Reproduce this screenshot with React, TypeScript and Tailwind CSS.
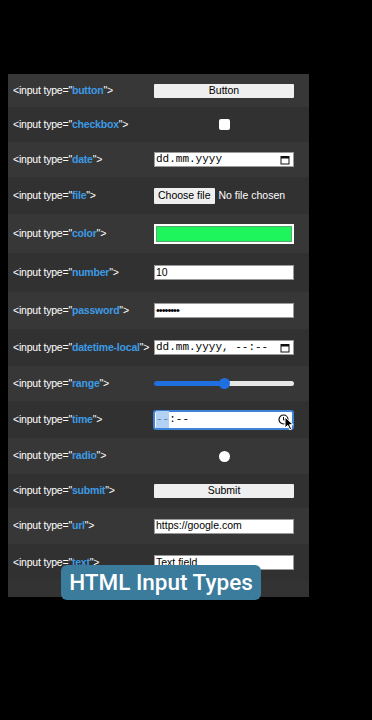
import React from "react";

const Cal = () => (
  <svg width="10" height="10" viewBox="0 0 10 10" className="shrink-0">
    <rect x="1" y="1.5" width="8" height="7.5" fill="none" stroke="#111" strokeWidth="1" />
    <rect x="1" y="1.5" width="8" height="2" fill="#111" />
  </svg>
);

const Field = ({ children, className = "" }: { children?: React.ReactNode; className?: string }) => (
  <div className={`w-[140px] h-[15px] bg-white border border-[#9a9a9a] flex items-center px-[1px] text-black ${className}`}>
    {children}
  </div>
);

const controls: React.ReactNode[] = [
  <div className="w-[140px] h-[14px] bg-[#efefef] flex items-center justify-center text-black text-[10.5px] rounded-[1px]">Button</div>,
  <div className="w-[140px] flex justify-center"><div className="w-[11px] h-[11px] bg-white rounded-[2px]" /></div>,
  <Field className="justify-between pr-[3px]"><span style={{ fontFamily: "'Liberation Mono', monospace" }} className="text-[11px]">dd.mm.yyyy</span><Cal /></Field>,
  <div className="w-[140px] flex items-center gap-[4px]">
    <div className="h-[16px] px-[4px] bg-[#efefef] text-black text-[10.5px] flex items-center rounded-[1px]">Choose file</div>
    <span className="text-white text-[10.5px]">No file chosen</span>
  </div>,
  <div className="w-[140px] h-[20px] bg-white p-[2px]"><div className="w-full h-full bg-[#1ef45b] border border-[#58a870]" /></div>,
  <Field><span className="text-[10.5px]">10</span></Field>,
  <Field><span className="text-[11px] tracking-[-1px] leading-none">••••••••</span></Field>,
  <Field className="justify-between pr-[3px]"><span style={{ fontFamily: "'Liberation Mono', monospace" }} className="text-[11px]">dd.mm.yyyy, --:--</span><Cal /></Field>,
  <div className="w-[140px] h-[11px] relative flex items-center">
    <div className="w-[70px] h-[5px] bg-[#1f6fe0] rounded-l-full" />
    <div className="flex-1 h-[5px] bg-[#e6e6e6] rounded-r-full" />
    <div className="absolute left-[65px] top-0 w-[11px] h-[11px] rounded-full bg-[#1f6fe0]" />
  </div>,
  <div className="w-[141px] h-[20px] -ml-[1px] bg-white border-2 border-[#3f83d6] rounded-[3px] flex items-center pl-[1px] pr-[3px] justify-between relative">
    <span style={{ fontFamily: "'Liberation Mono', monospace" }} className="text-[11px] text-black flex"><span className="bg-[#b3d1f5] text-[#5a7fb0]">--</span><span>:--</span></span>
    <svg width="11" height="11" viewBox="0 0 11 11"><circle cx="5.5" cy="5.5" r="4.5" fill="none" stroke="#111" strokeWidth="1.2" /><path d="M5.5 3v3h2" fill="none" stroke="#111" strokeWidth="1" /></svg>
    <svg width="10" height="15" viewBox="0 0 10 15" className="absolute left-[129px] top-[4px]"><path d="M1 1v11l2.8-2.6 2 4.4 1.8-.8-2-4.3H9.2z" fill="#000" stroke="#fff" strokeWidth="1" /></svg>
  </div>,
  <div className="w-[140px] flex justify-center"><div className="w-[11px] h-[11px] bg-white rounded-full" /></div>,
  <div className="w-[140px] h-[14px] bg-[#efefef] flex items-center justify-center text-black text-[10.5px] rounded-[1px]">Submit</div>,
  <Field><span className="text-[10.5px]">https://google.com</span></Field>,
  <Field><span className="text-[10.5px]">Text field</span></Field>,
];

const types = ["button", "checkbox", "date", "file", "color", "number", "password", "datetime-local", "range", "time", "radio", "submit", "url", "text"];
const heights = ["h-[33px]", "h-[35px]", "h-[35px]", "h-[37px]", "h-[39px]", "h-[39px]", "h-[37px]", "h-[37px]", "h-[35px]", "h-[37px]", "h-[36px]", "h-[34px]", "h-[36px]", "h-[37px]"];

export default function App() {
  return (
    <div className="w-[372px] h-[720px] bg-black relative" style={{ fontFamily: "'Liberation Sans', Arial, sans-serif" }}>
      <div className="absolute left-[8px] top-[74px] w-[301px] bg-[#333] pb-[16px]">
        {types.map((t, i) => (
          <div key={t} className={`${heights[i]} flex items-center pl-[5px] ${i % 2 === 0 ? "bg-[#373737]" : "bg-[#313131]"}`}>
            <div className="w-[141px] text-[10.5px] text-white whitespace-nowrap tracking-[-0.2px]">
              &lt;input type="<span className="text-[#3d9be6] font-bold">{t}</span>"&gt;
            </div>
            {controls[i]}
          </div>
        ))}
      </div>
      <div className="absolute left-[61px] top-[565px] w-[200px] h-[35px] bg-[#3b7b9b] rounded-[6px] flex items-center justify-center">
        <span className="text-white text-[22.5px] font-medium" style={{ fontFamily: "Roboto, 'Noto Sans', sans-serif" }}>HTML Input Types</span>
      </div>
    </div>
  );
}
